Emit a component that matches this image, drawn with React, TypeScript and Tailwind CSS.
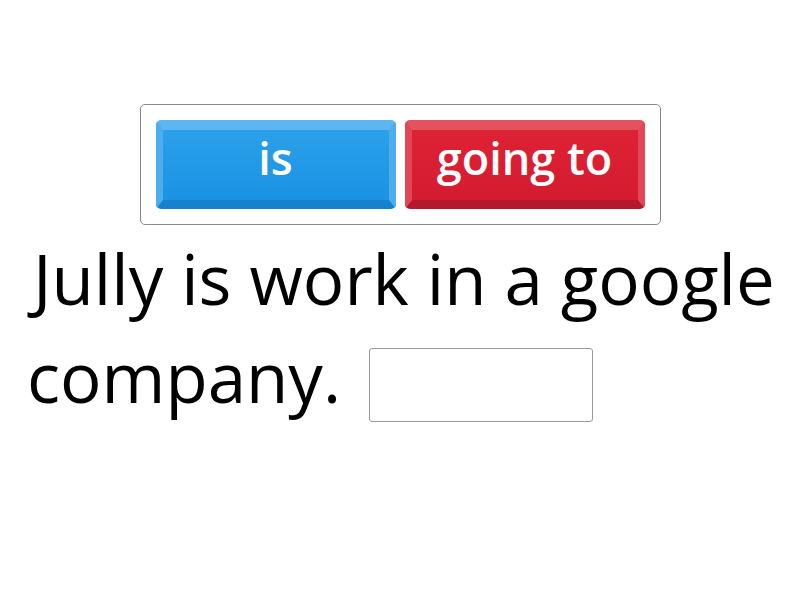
import React from 'react';

// Answer tiles shown above the sentence
const options = [
  {
    label: 'is',
    className:
      'bg-gradient-to-b from-[#2ba0ea] to-[#1993e2] border-t-[#5db6ef] border-x-[#4dadec] border-b-[#1681cc]',
  },
  {
    label: 'going to',
    className:
      'bg-gradient-to-b from-[#de2236] to-[#d41b2f] border-t-[#e5525f] border-x-[#e34656] border-b-[#b3192b]',
  },
];

function OptionTile({ label, className }: { label: string; className: string }) {
  return (
    <div
      className={`w-[240px] h-[89px] rounded-[5px] border-t-[10px] border-x-[7px] border-b-[9px] flex items-center justify-center text-white font-semibold text-[45px] leading-none pb-[15px] ${className}`}
    >
      {label}
    </div>
  );
}

export default function App() {
  return (
    <div
      className="w-[800px] h-[600px] bg-white flex flex-col items-center overflow-hidden"
      style={{ fontFamily: '"Open Sans", "Noto Sans", sans-serif' }}
    >
      <div className="mt-[104px] w-[521px] h-[121px] rounded-[5px] border border-[#8a8a8a] flex items-center justify-center gap-[9px]">
        {options.map((o) => (
          <OptionTile key={o.label} label={o.label} className={o.className} />
        ))}
      </div>

      <div className="w-full pl-[27px] pr-[4px] mt-[4px] text-[69px] leading-[98px] text-black">
        <div className="pl-[6px]">Jully is work in a google</div>
        <div className="flex items-center">
          <span>company.</span>
          <div className="ml-[28px] mt-[18px] w-[224px] h-[74px] rounded-[3px] border border-[#9a9a9a] bg-white" />
        </div>
      </div>
    </div>
  );
}
